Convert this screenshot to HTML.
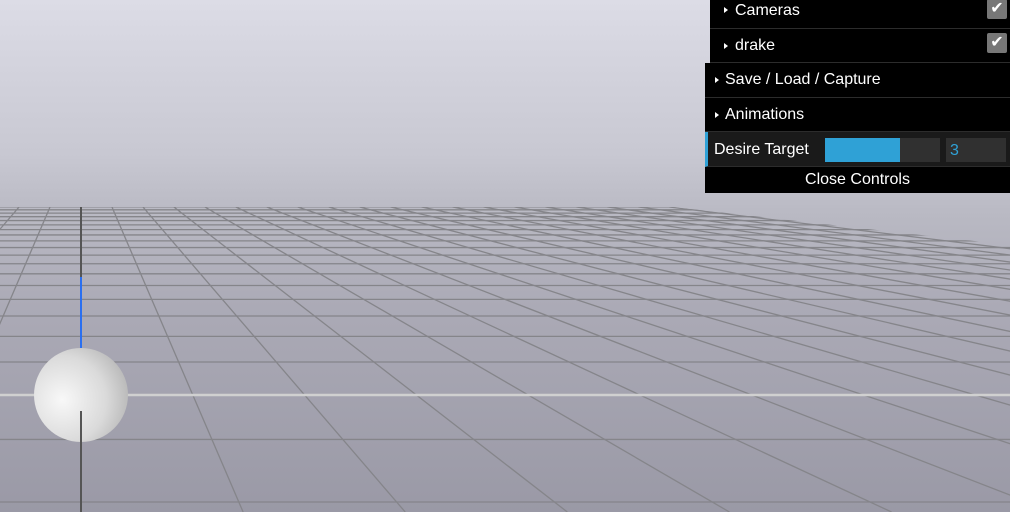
<!DOCTYPE html>
<html><head><style>
*{margin:0;padding:0;box-sizing:border-box}
html,body{width:1010px;height:512px;overflow:hidden}
body{position:relative;font-family:"Liberation Sans",sans-serif;
background:linear-gradient(#dcdce6 0%,#c8c8d2 30%,#b9b9c3 42%,#abaab6 60%,#9a99a6 100%)}
svg{position:absolute;left:0;top:0}
.panel{position:absolute;left:705px;top:0;width:305px;height:193px;overflow:hidden;color:#fff;font-size:16px}
.row{position:absolute;left:0;width:305px;background:#000;border-bottom:1px solid #2c2c2c;height:35px;line-height:35px;padding-left:20px}
.row.in{left:5px;width:300px;padding-left:25px}
.tri{position:absolute;top:15px;width:0;height:0;border-left:4px solid #fff;border-top:3px solid transparent;border-bottom:3px solid transparent}
.cb{position:absolute;left:277px;width:20px;height:20px;background:#777;border-radius:2px;color:#fff;font-size:16px;line-height:20px;text-align:center}
</style></head><body>
<svg width="1010" height="512">
<defs>
<clipPath id="c"><polygon points="0,207 673,207 1010,245 1010,512 0,512"/></clipPath>
<radialGradient id="s" cx="0.3" cy="0.55" r="0.85"><stop offset="0" stop-color="#f8f8f8"/><stop offset="0.55" stop-color="#dadada"/><stop offset="1" stop-color="#a8a8a8"/></radialGradient>
</defs>
<g clip-path="url(#c)" stroke="#85858a" stroke-width="1.3" fill="none" id="g"></g>
<line x1="0" y1="395" x2="1010" y2="395" stroke="#d0d0d0" stroke-width="2.5"/>
<line x1="81" y1="207" x2="81" y2="277" stroke="#555" stroke-width="2"/>
<line x1="81" y1="277" x2="81" y2="348" stroke="#2a6ff0" stroke-width="2"/>
<circle cx="81" cy="395" r="47" fill="url(#s)"/>
<line x1="81" y1="411" x2="81" y2="512" stroke="#555" stroke-width="2"/>
</svg>
<div class="panel">
<div class="row in" style="top:0;height:29px;line-height:22px"><span class="tri" style="left:14px;top:7px"></span>Cameras<span class="cb" style="top:-1px">✔</span></div>
<div class="row in" style="top:29px;height:34px;line-height:33px"><span class="tri" style="left:14px;top:14px"></span>drake<span class="cb" style="top:4px">✔</span></div>
<div class="row" style="top:63px;height:35px;line-height:34px"><span class="tri" style="left:10px;top:14px"></span>Save / Load / Capture</div>
<div class="row" style="top:98px;height:34px;line-height:34px"><span class="tri" style="left:10px;top:14px"></span>Animations</div>
<div class="row" style="top:132px;height:35px;line-height:36px;background:#1a1a1a;border-left:3px solid #2fa1d6;padding-left:6px">Desire Target
<span style="position:absolute;left:117px;top:6px;width:115px;height:24px;background:#303030"><span style="display:block;width:75px;height:24px;background:#2fa1d6"></span></span>
<span style="position:absolute;left:238px;top:6px;width:60px;height:24px;background:#303030;color:#2fa1d6;line-height:26px;padding-left:4px;font-size:16px">3</span></div>
<div class="row" style="top:167px;height:26px;line-height:26px;text-align:center;padding:0;border:0">Close Controls</div>
</div>
<script>
var g=document.getElementById('g'),s='';
for(var k=0;k<=20;k++){var y=135+1/(0.002725+0.00056*k);s+='<line x1="0" y1="'+y+'" x2="1010" y2="'+y+'"/>';}
for(var j=-4;j<=40;j++){if(j==0)continue;var a=j*0.43;s+='<line x1="'+(81+a*72)+'" y1="207" x2="'+(81+a*377)+'" y2="512"/>';}
g.innerHTML=s;
</script>
</body></html>
